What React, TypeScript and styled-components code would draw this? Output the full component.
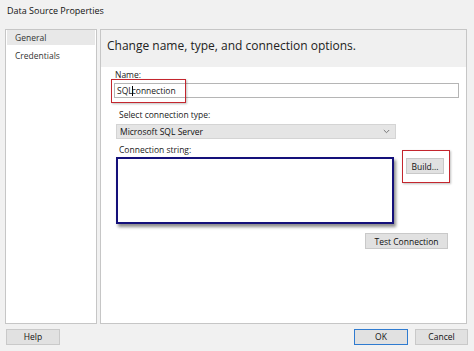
import React from "react";
import styled, {createGlobalStyle} from "styled-components";

const GlobalStyle = createGlobalStyle`
  html, body {
    margin: 0;
    padding: 0;
    background: #f1f1f1;
  }
  * {
    box-sizing: border-box;
  }
`;

const Window = styled.div`
  display: flex;
  flex-direction: column;
  width: 474px;
  height: 351px;
  background: #f1f1f1;
  font-family: "Open Sans", "Noto Sans", sans-serif;
  font-size: 8.5px;
  color: #1a1a1a;
  overflow: hidden;
`;

const TitleBar = styled.div`
  height: 29px;
  padding: 4px 0 0 7px;
  font-size: 9px;
  color: #111;
`;

const Main = styled.div`
  display: flex;
  gap: 3px;
  height: 295px;
  padding: 0 7px 0 5px;
`;

const NavPanel = styled.div`
  display: flex;
  flex-direction: column;
  width: 92px;
  padding: 0 1px;
  background: #fff;
  border: 1px solid #c6c6c6;
`;

const NavItem = styled.div<{ $active?: boolean }>`
  display: flex;
  align-items: center;
  height: 15px;
  padding-left: 8px;
  margin-bottom: 3px;
  background: ${p => (p.$active ? "#e8e8e8" : "transparent")};
  color: #333;
`;

const ContentPanel = styled.div`
  display: flex;
  flex-direction: column;
  flex: 1;
  background: #fff;
  border: 1px solid #c6c6c6;
`;

const PanelHeader = styled.div`
  display: flex;
  align-items: center;
  height: 37px;
  padding: 0 0 6px 6px;
  background: #f0f0f0;
  font-size: 12px;
  color: #222;
`;

const PanelBody = styled.div`
  display: flex;
  flex-direction: column;
  padding: 1px 7px 0 13px;
`;

const Label = styled.div<{ $indent?: number; $top?: number }>`
  height: 13px;
  line-height: 13px;
  margin-left: ${p => p.$indent || 0}px;
  margin-top: ${p => p.$top || 0}px;
  color: #222;
`;

const FieldWrap = styled.div`
  position: relative;
  margin-top: 2px;
`;

const TextInput = styled.div`
  display: flex;
  align-items: center;
  height: 15px;
  padding-left: 2px;
  border: 1px solid #b5b5b5;
  background: #fff;
  font-size: 8.5px;
`;

const Caret = styled.span`
  display: inline-block;
  width: 1px;
  height: 10px;
  background: #000;
  margin: 0 -1px;
`;

const Highlight = styled.div`
  position: absolute;
  border: 1.5px solid #c4262e;
  box-shadow: 1px 1px 2px rgba(0, 0, 0, 0.25);
  pointer-events: none;
`;

const ConnectionGroup = styled.div`
  display: flex;
  flex-direction: column;
  margin-left: 2px;
  margin-top: 10px;
`;

const Select = styled.div`
  display: flex;
  align-items: center;
  justify-content: space-between;
  width: 280px;
  height: 15px;
  margin-top: 1px;
  padding: 0 5px 0 3px;
  background: #e5e5e5;
  border: 1px solid #d4d4d4;
  color: #111;
`;

const ConnRow = styled.div`
  display: flex;
  align-items: flex-start;
  margin-top: 1px;
`;

const ConnBox = styled.div`
  width: 278px;
  height: 67px;
  border: 2px solid #14107a;
  background: #fff;
  box-shadow: 2px 3px 3px rgba(0, 0, 0, 0.45);
`;

const BuildWrap = styled.div`
  position: relative;
  margin-left: 12px;
  margin-top: 1px;
`;

const Button = styled.div<{ $w: number; $primary?: boolean }>`
  display: flex;
  align-items: center;
  justify-content: center;
  width: ${p => p.$w}px;
  height: 16px;
  background: #e1e1e1;
  border: 1px solid ${p => (p.$primary ? "#2f7bd0" : "#c9c9c9")};
  color: #111;
  font-size: 8.5px;
`;

const TestRow = styled.div`
  display: flex;
  justify-content: flex-end;
  padding-right: 11px;
  margin-top: 9px;
`;

const Footer = styled.div`
  display: flex;
  align-items: center;
  gap: 7px;
  height: 27px;
  padding: 0 6px 2px 6px;
`;

const Spacer = styled.div`
  flex: 1;
`;

const Chevron = () => (
  <svg width="7" height="5" viewBox="0 0 7 5">
    <path d="M0.8 1 L3.5 3.7 L6.2 1" fill="none" stroke="#777" strokeWidth="1" />
  </svg>
);

export default function App() {
  return (
    <Window>
      <GlobalStyle />
      <TitleBar>Data Source Properties</TitleBar>
      <Main>
        <NavPanel>
          <NavItem $active>General</NavItem>
          <NavItem>Credentials</NavItem>
        </NavPanel>
        <ContentPanel>
          <PanelHeader>Change name, type, and connection options.</PanelHeader>
          <PanelBody>
            <Label $indent={1}>Name:</Label>
            <FieldWrap>
              <TextInput>
                SQL<Caret />connection
              </TextInput>
              <Highlight style={{left: -3, top: -4, width: 75, height: 24}} />
            </FieldWrap>
            <ConnectionGroup>
              <Label $indent={3}>Select connection type:</Label>
              <FieldWrap>
                <Select>
                  <span>Microsoft SQL Server</span>
                  <Chevron />
                </Select>
              </FieldWrap>
              <Label $indent={3} $top={4}>Connection string:</Label>
              <ConnRow>
                <ConnBox />
                <BuildWrap>
                  <Button $w={38}>Build...</Button>
                  <Highlight style={{left: -4, top: -8, width: 48, height: 33}} />
                </BuildWrap>
              </ConnRow>
              <TestRow>
                <Button $w={83}>Test Connection</Button>
              </TestRow>
            </ConnectionGroup>
          </PanelBody>
        </ContentPanel>
      </Main>
      <Footer>
        <Button $w={54}>Help</Button>
        <Spacer />
        <Button $w={54} $primary>OK</Button>
        <Button $w={53}>Cancel</Button>
      </Footer>
    </Window>
  );
}
